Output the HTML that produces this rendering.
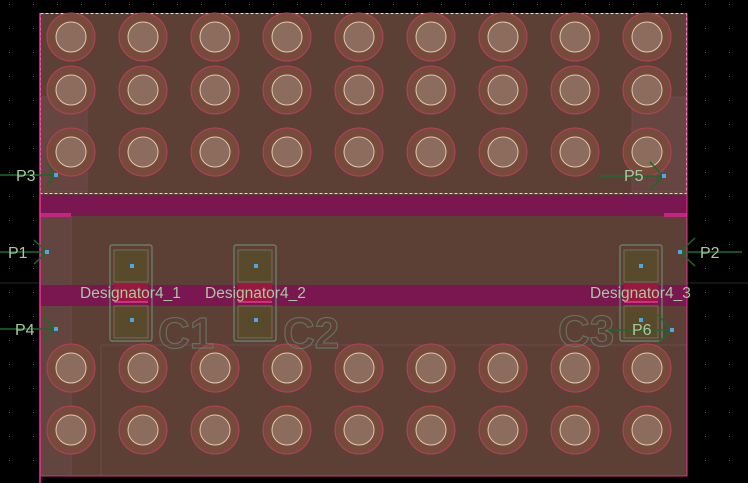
<!DOCTYPE html>
<html><head><style>
html,body{margin:0;padding:0;background:#000;width:748px;height:483px;overflow:hidden}
svg{display:block}
text{font-family:"Liberation Sans",sans-serif}
</style></head><body>
<svg width="748" height="483" viewBox="0 0 748 483" xmlns="http://www.w3.org/2000/svg">
<defs>
<pattern id="g" width="24" height="24" patternUnits="userSpaceOnUse" x="9" y="4">
<rect x="0" y="0" width="1" height="1" fill="#666"/>
</pattern>
<g id="pad">
<circle r="24" fill="#784a3c" stroke="#b8405a" stroke-width="1"/>
<circle r="15" fill="#8c6c5c" stroke="#e0c8b0" stroke-width="1"/>
</g>
</defs>
<rect width="748" height="483" fill="#000"/>
<rect width="748" height="483" fill="url(#g)"/>
<line x1="0" y1="283" x2="748" y2="283" stroke="#1a2a2a"/>
<rect x="40" y="13" width="647" height="463" fill="#5c4036"/>
<rect x="40" y="97" width="47" height="95" fill="#674540" stroke="#7a4a55" stroke-width="0.7"/>
<rect x="632" y="97" width="55" height="95" fill="#674540" stroke="#7a4a55" stroke-width="0.7"/>
<rect x="40" y="213" width="31" height="263" fill="#634540" stroke="#7a4a55" stroke-width="0.7"/>
<rect x="101" y="345" width="586" height="131" fill="none" stroke="#7a4a55" stroke-width="0.7"/>
<rect x="40" y="195" width="647" height="21" fill="#7a1650"/>
<rect x="40" y="285" width="647" height="21" fill="#7a1650"/>
<rect x="40" y="213" width="31" height="4" fill="#c02880"/>
<rect x="664" y="213" width="23" height="4" fill="#c02880"/>
<rect x="40.5" y="13.5" width="646" height="180" fill="none" stroke="#ddd" stroke-dasharray="3,2" stroke-width="1"/>
<line x1="40" y1="13" x2="40" y2="483" stroke="#ff2a9a" stroke-width="1.5"/>
<line x1="687" y1="13" x2="687" y2="476" stroke="#ff2a9a" stroke-width="1"/>
<line x1="40" y1="476" x2="687" y2="476" stroke="#c83a7a" stroke-width="1"/>
<g>
<use href="#pad" x="71" y="37"/><use href="#pad" x="143" y="37"/><use href="#pad" x="215" y="37"/><use href="#pad" x="287" y="37"/><use href="#pad" x="359" y="37"/><use href="#pad" x="431" y="37"/><use href="#pad" x="503" y="37"/><use href="#pad" x="575" y="37"/><use href="#pad" x="647" y="37"/>
<use href="#pad" x="71" y="90"/><use href="#pad" x="143" y="90"/><use href="#pad" x="215" y="90"/><use href="#pad" x="287" y="90"/><use href="#pad" x="359" y="90"/><use href="#pad" x="431" y="90"/><use href="#pad" x="503" y="90"/><use href="#pad" x="575" y="90"/><use href="#pad" x="647" y="90"/>
<use href="#pad" x="71" y="152"/><use href="#pad" x="143" y="152"/><use href="#pad" x="215" y="152"/><use href="#pad" x="287" y="152"/><use href="#pad" x="359" y="152"/><use href="#pad" x="431" y="152"/><use href="#pad" x="503" y="152"/><use href="#pad" x="575" y="152"/><use href="#pad" x="647" y="152"/>
<use href="#pad" x="71" y="368"/><use href="#pad" x="143" y="368"/><use href="#pad" x="215" y="368"/><use href="#pad" x="287" y="368"/><use href="#pad" x="359" y="368"/><use href="#pad" x="431" y="368"/><use href="#pad" x="503" y="368"/><use href="#pad" x="575" y="368"/><use href="#pad" x="647" y="368"/>
<use href="#pad" x="71" y="430"/><use href="#pad" x="143" y="430"/><use href="#pad" x="215" y="430"/><use href="#pad" x="287" y="430"/><use href="#pad" x="359" y="430"/><use href="#pad" x="431" y="430"/><use href="#pad" x="503" y="430"/><use href="#pad" x="575" y="430"/><use href="#pad" x="647" y="430"/>
</g>
<g stroke="#6a8a70" stroke-width="1.2" fill="none">
<rect x="110" y="245" width="42" height="96" rx="2"/>
<rect x="234" y="245" width="42" height="96" rx="2"/>
<rect x="620" y="245" width="42" height="96" rx="2"/>
</g>
<g fill="#5a4a2c" stroke="#7a7a60" stroke-width="0.8">
<rect x="114" y="250" width="34" height="32"/><rect x="114" y="306" width="34" height="32"/>
<rect x="238" y="250" width="34" height="32"/><rect x="238" y="306" width="34" height="32"/>
<rect x="624" y="250" width="34" height="32"/><rect x="624" y="306" width="34" height="32"/>
</g>
<g fill="#9a1840"><rect x="114" y="284" width="34" height="18"/><rect x="238" y="284" width="34" height="18"/><rect x="624" y="284" width="34" height="18"/></g>
<g stroke="#ff3aa0" stroke-width="1.2"><line x1="114" y1="302" x2="148" y2="302"/><line x1="238" y1="302" x2="272" y2="302"/><line x1="624" y1="302" x2="658" y2="302"/></g>
<g fill="#4aa8e8">
<rect x="130" y="264" width="4" height="4"/><rect x="130" y="318" width="4" height="4"/>
<rect x="254" y="264" width="4" height="4"/><rect x="254" y="318" width="4" height="4"/>
<rect x="639" y="264" width="4" height="4"/><rect x="639" y="318" width="4" height="4"/>
</g>
<g font-size="44" font-weight="bold" fill="none" stroke="#6a7a6a" stroke-opacity="0.8" stroke-width="1.2">
<text x="158" y="348">C1</text>
<text x="283" y="348">C2</text>
<text x="558" y="346">C3</text>
</g>
<g font-size="15.5" fill="#a8c8a0">
<text x="80" y="298">Designator4_1</text>
<text x="205" y="298">Designator4_2</text>
<text x="590" y="298">Designator4_3</text>
</g>
<g stroke="#1a6a2a" stroke-width="1.5" fill="none">
<line x1="0" y1="175" x2="55" y2="175"/><path d="M47 163 L55 175 L47 186"/>
<line x1="0" y1="252" x2="47" y2="252"/><path d="M34 240 L47 252 L34 264"/>
<line x1="0" y1="329" x2="55" y2="329"/><path d="M43 316 L55 329 L43 340"/>
<line x1="600" y1="176" x2="663" y2="176"/><path d="M650 162 L663 176 L650 190"/>
<line x1="680" y1="252" x2="742" y2="252"/><path d="M695 238 L680 252 L695 266"/>
<line x1="608" y1="330" x2="672" y2="330"/><path d="M658 315 L672 330 L658 343"/>
</g>
<g fill="#4aa8e8">
<rect x="54" y="173" width="4" height="4"/><rect x="45" y="250" width="4" height="4"/><rect x="54" y="327" width="4" height="4"/>
<rect x="662" y="174" width="4" height="4"/><rect x="678" y="250" width="4" height="4"/><rect x="670" y="328" width="4" height="4"/>
</g>
<g font-size="16" fill="#a8c8a0">
<text x="16" y="181">P3</text><text x="8" y="258">P1</text><text x="15" y="335">P4</text>
<text x="624" y="181">P5</text><text x="700" y="258">P2</text><text x="632" y="335">P6</text>
</g>
</svg>
</body></html>
